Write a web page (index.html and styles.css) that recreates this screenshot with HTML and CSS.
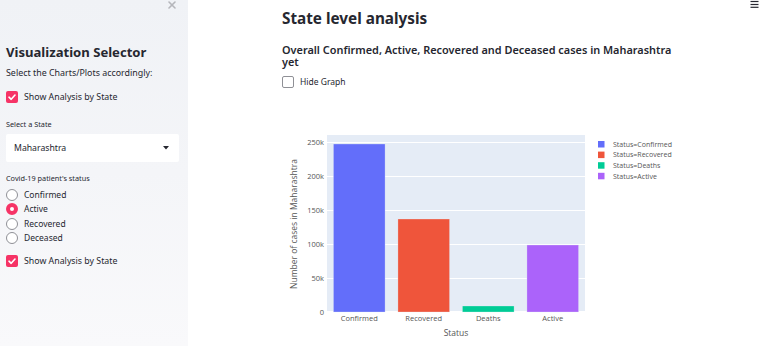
FILE: index.html
```html
<!DOCTYPE html>
<html lang="en">
<head>
<meta charset="utf-8">
<title>State level analysis</title>
<link rel="stylesheet" href="styles.css">
</head>
<body>
<div class="app">
  <aside class="sidebar">
    <div class="close"><svg viewBox="0 0 8 8" width="8" height="8"><g stroke="#b5b6bb" stroke-width="1.6" stroke-linecap="round"><line x1="1" y1="1" x2="7" y2="7"/><line x1="7" y1="1" x2="1" y2="7"/></g></svg></div>
    <h2 class="title">Visualization Selector</h2>
    <p class="desc">Select the Charts/Plots accordingly:</p>
    <div class="check-row first-check">
      <span class="cb on"><svg viewBox="0 0 12 12" width="12" height="12"><path d="M3 6.2 L5.2 8.3 L9 4" fill="none" stroke="#fff" stroke-width="1.6" stroke-linecap="round" stroke-linejoin="round"/></svg></span>
      <span class="lbl">Show Analysis by State</span>
    </div>
    <div class="small-label state-label">Select a State</div>
    <div class="select">
      <span>Maharashtra</span>
      <svg class="caret" viewBox="0 0 6 4" width="6" height="4"><path d="M0 0 H6 L3 3.5 Z" fill="#262730"/></svg>
    </div>
    <div class="small-label status-label">Covid-19 patient's status</div>
    <div class="radios">
      <div class="radio-row"><span class="rd"></span><span class="lbl">Confirmed</span></div>
      <div class="radio-row"><span class="rd on"></span><span class="lbl">Active</span></div>
      <div class="radio-row"><span class="rd"></span><span class="lbl">Recovered</span></div>
      <div class="radio-row"><span class="rd"></span><span class="lbl">Deceased</span></div>
    </div>
    <div class="check-row second-check">
      <span class="cb on"><svg viewBox="0 0 12 12" width="12" height="12"><path d="M3 6.2 L5.2 8.3 L9 4" fill="none" stroke="#fff" stroke-width="1.6" stroke-linecap="round" stroke-linejoin="round"/></svg></span>
      <span class="lbl">Show Analysis by State</span>
    </div>
  </aside>
  <main class="main">
    <h1 class="page-title">State level analysis</h1>
    <h3 class="subtitle">Overall Confirmed, Active, Recovered and Deceased cases in Maharashtra yet</h3>
    <div class="check-row hide-row">
      <span class="cb off"></span>
      <span class="lbl">Hide Graph</span>
    </div>
    <svg class="chart" width="420" height="246" viewBox="0 0 420 246">
      <rect x="45" y="35" width="258" height="177" fill="#e5ecf6"/>
      <g stroke="#fff" stroke-width="1">
        <line x1="45" x2="303" y1="42.5" y2="42.5"/>
        <line x1="45" x2="303" y1="76.5" y2="76.5"/>
        <line x1="45" x2="303" y1="110.5" y2="110.5"/>
        <line x1="45" x2="303" y1="144.5" y2="144.5"/>
        <line x1="45" x2="303" y1="178.5" y2="178.5"/>
        <line x1="45" x2="303" y1="212" y2="212" stroke-width="2"/>
      </g>
      <g stroke="#e5ecf6" stroke-width="0.5" stroke-opacity="0.6">
        <rect x="51.45" y="44" width="51.6" height="168" fill="#636efa"/>
        <rect x="115.95" y="119" width="51.6" height="93" fill="#ef553b"/>
        <rect x="180.45" y="206" width="51.6" height="6" fill="#00cc96"/>
        <rect x="244.95" y="145" width="51.6" height="67" fill="#ab63fa"/>
      </g>
      <g class="tick" text-anchor="end">
        <text x="42" y="45">250k</text>
        <text x="42" y="79">200k</text>
        <text x="42" y="113">150k</text>
        <text x="42" y="147">100k</text>
        <text x="42" y="181">50k</text>
        <text x="42" y="215">0</text>
      </g>
      <g class="tick" text-anchor="middle">
        <text x="77.25" y="221">Confirmed</text>
        <text x="141.75" y="221">Recovered</text>
        <text x="206.25" y="221">Deaths</text>
        <text x="270.75" y="221">Active</text>
      </g>
      <text class="axis-title" x="174" y="236" text-anchor="middle">Status</text>
      <text class="axis-title" x="0" y="0" text-anchor="middle" transform="translate(15 124) rotate(-90)">Number of cases in Maharashtra</text>
      <g class="legend">
        <rect x="316" y="41" width="6.5" height="6.5" fill="#636efa"/>
        <rect x="316" y="51.6" width="6.5" height="6.5" fill="#ef553b"/>
        <rect x="316" y="62.2" width="6.5" height="6.5" fill="#00cc96"/>
        <rect x="316" y="72.8" width="6.5" height="6.5" fill="#ab63fa"/>
        <text x="331" y="46.7">Status=Confirmed</text>
        <text x="331" y="57.3">Status=Recovered</text>
        <text x="331" y="67.9">Status=Deaths</text>
        <text x="331" y="78.5">Status=Active</text>
      </g>
    </svg>
  </main>
  <svg class="menu" width="9" height="8" viewBox="0 0 9 8"><g stroke="#262730" stroke-width="1.2"><line x1="0.5" x2="8.5" y1="1.5" y2="1.5"/><line x1="0.5" x2="8.5" y1="4.5" y2="4.5"/><line x1="0.5" x2="8.5" y1="7.3" y2="7.3"/></g></svg>
</div>
</body>
</html>
```
FILE: styles.css
```css
html, body {
  margin: 0;
  padding: 0;
  background: #fff;
}
body {
  font-family: "Noto Sans", "DejaVu Sans", sans-serif;
  color: #262730;
}
.app {
  position: relative;
  display: flex;
  width: 768px;
  height: 346px;
  overflow: hidden;
}
.sidebar {
  width: 188px;
  flex: 0 0 188px;
  box-sizing: border-box;
  padding: 0 9px 0 6px;
  background: linear-gradient(180deg, #f0f2f6 0%, #f4f5f8 50%, #f9f9fb 100%);
  display: flex;
  flex-direction: column;
}
.close {
  height: 12px;
  display: flex;
  justify-content: flex-end;
  align-items: flex-start;
  padding: 1px 3px 0 0;
  box-sizing: border-box;
}
.close svg { display: block; }
.title {
  margin: 30px 0 0;
  font-size: 13.1px;
  line-height: 20px;
  font-weight: 700;
  color: #262730;
}
.desc {
  margin: 4px 0 0;
  font-size: 8.9px;
  line-height: 14px;
  color: #262730;
}
.check-row {
  display: flex;
  align-items: center;
  height: 14px;
  gap: 6px;
}
.first-check { margin-top: 10px; }
.second-check { margin-top: 8.7px; }
.cb {
  width: 12px;
  height: 12px;
  box-sizing: border-box;
  border-radius: 2px;
  display: flex;
  flex: 0 0 12px;
}
.cb.on { background: #f63366; }
.cb.off { background: #fff; border: 1px solid #8f9096; }
.lbl {
  font-size: 8.8px;
  line-height: 14px;
  color: #262730;
  white-space: nowrap;
}
.radio-row .lbl { font-size: 8.5px; }
.hide-row .lbl { font-size: 8.5px; }
.small-label {
  font-size: 7.3px;
  line-height: 10px;
  color: #262730;
}
.state-label { margin-top: 15px; }
.status-label { margin-top: 11px; }
.select {
  margin-top: 5px;
  height: 28px;
  background: #fff;
  border-radius: 2px;
  display: flex;
  align-items: center;
  justify-content: space-between;
  padding: 0 10px 0 8px;
  font-size: 8.7px;
}
.radios {
  margin-top: 5px;
  display: flex;
  flex-direction: column;
}
.radio-row {
  display: flex;
  align-items: center;
  height: 14.33px;
  gap: 6px;
}
.rd {
  width: 12px;
  height: 12px;
  box-sizing: border-box;
  border-radius: 50%;
  border: 1px solid #8f9096;
  background: #fff;
  flex: 0 0 12px;
}
.rd.on {
  border: 4px solid #f63366;
  background: #fff;
}
.main {
  flex: 1;
  padding-left: 94px;
  display: flex;
  flex-direction: column;
  align-items: flex-start;
}
.page-title {
  margin: 6px 0 0;
  font-size: 15.3px;
  line-height: 24px;
  font-weight: 700;
  color: #262730;
}
.subtitle {
  margin: 14px 0 0;
  width: 392px;
  font-size: 10.9px;
  line-height: 12px;
  font-weight: 600;
  color: #262730;
}
.hide-row { margin-top: 7px; }
.chart {
  display: block;
  margin-top: 11px;
  font-family: "Open Sans", "Noto Sans", sans-serif;
}
.tick {
  font-size: 7.5px;
  fill: #555;
}
.axis-title {
  font-size: 8.5px;
  fill: #555;
}
.legend text {
  font-size: 7px;
  fill: #555;
}
.menu {
  position: absolute;
  top: 0;
  right: 9px;
}
```
